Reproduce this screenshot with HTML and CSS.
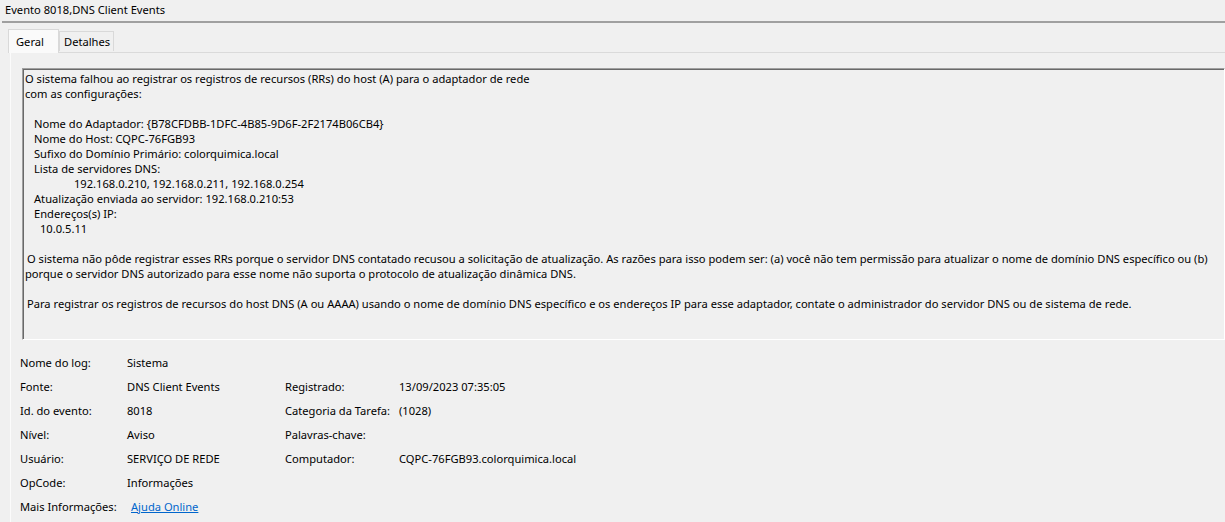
FILE: index.html
```html
<!DOCTYPE html>
<html lang="pt-BR">
<head>
<meta charset="utf-8">
<title>Evento 8018,DNS Client Events</title>
<link rel="stylesheet" href="styles.css">
</head>
<body>
<div class="titlebar">Evento 8018,DNS Client Events</div>
<div class="divider"></div>
<div class="tabs">
  <div class="tab tab-active">Geral</div>
  <div class="tab">Detalhes</div>
</div>
<div class="panel">
  <div class="message">
    <div class="ln">O sistema falhou ao registrar os registros de recursos (RRs) do host (A) para o adaptador de rede</div>
    <div class="ln">com as configurações:</div>
    <div class="ln blank"></div>
    <div class="ln i1">Nome do Adaptador: {B78CFDBB-1DFC-4B85-9D6F-2F2174B06CB4}</div>
    <div class="ln i1">Nome do Host: CQPC-76FGB93</div>
    <div class="ln i1">Sufixo do Domínio Primário: colorquimica.local</div>
    <div class="ln i1">Lista de servidores DNS:</div>
    <div class="ln i3">192.168.0.210, 192.168.0.211, 192.168.0.254</div>
    <div class="ln i1">Atualização enviada ao servidor: 192.168.0.210:53</div>
    <div class="ln i1">Endereços(s) IP:</div>
    <div class="ln i2">10.0.5.11</div>
    <div class="ln blank"></div>
    <div class="ln sp">O sistema não pôde registrar esses RRs porque o servidor DNS contatado recusou a solicitação de atualização. As razões para isso podem ser: (a) você não tem permissão para atualizar o nome de domínio DNS específico ou (b)</div>
    <div class="ln">porque o servidor DNS autorizado para esse nome não suporta o protocolo de atualização dinâmica DNS.</div>
    <div class="ln blank"></div>
    <div class="ln sp">Para registrar os registros de recursos do host DNS (A ou AAAA) usando o nome de domínio DNS específico e os endereços IP para esse adaptador, contate o administrador do servidor DNS ou de sistema de rede.</div>
  </div>
  <div class="info">
    <div>Nome do log:</div><div>Sistema</div><div></div><div></div>
    <div>Fonte:</div><div>DNS Client Events</div><div>Registrado:</div><div>13/09/2023 07:35:05</div>
    <div>Id. do evento:</div><div>8018</div><div>Categoria da Tarefa:</div><div>(1028)</div>
    <div>Nível:</div><div>Aviso</div><div>Palavras-chave:</div><div></div>
    <div>Usuário:</div><div>SERVIÇO DE REDE</div><div>Computador:</div><div>CQPC-76FGB93.colorquimica.local</div>
    <div>OpCode:</div><div>Informações</div><div></div><div></div>
    <div>Mais Informações:</div><div><a class="link" href="#">Ajuda Online</a></div><div></div><div></div>
  </div>
</div>
</body>
</html>
```
FILE: styles.css
```css
html, body {
  margin: 0;
  padding: 0;
  background: #f0f0f0;
  overflow: hidden;
}
body {
  font-family: "Noto Sans", "Liberation Sans", sans-serif;
  font-size: 11.15px;
  color: #000;
  width: 1225px;
  height: 522px;
  display: flex;
  flex-direction: column;
}
.titlebar {
  height: 21px;
  line-height: 20px;
  padding-left: 5px;
  white-space: nowrap;
  flex: none;
}
.divider {
  margin-left: 2px;
  height: 2px;
  background: #a0a0a0;
  flex: none;
}
.tabs {
  display: flex;
  align-items: flex-end;
  padding-left: 8px;
  padding-top: 6px;
  height: 23px;
  flex: none;
}
.tab {
  height: 19px;
  line-height: 19px;
  padding: 0 3px 0 4px;
  border: 1px solid #d9d9d9;
  border-bottom: none;
  background: #f0f0f0;
  margin-bottom: 1px;
}
.tab-active {
  height: 23px;
  line-height: 24px;
  width: 42px;
  padding: 0 0 0 7px;
  background: #fafafa;
  margin-bottom: -1px;
  position: relative;
  z-index: 1;
}
.panel {
  flex: 1;
  min-height: 0;
  margin-left: 10px;
  border-top: 1px solid #dadada;
  border-left: 1px solid #fbfbfb;
  padding: 15px 0 0 11px;
}
.message {
  height: 268px;
  border-top: 1px solid #a0a0a0;
  border-left: 1px solid #a0a0a0;
  border-bottom: 1px solid #ffffff;
  border-right: 1px solid #ffffff;
  box-shadow: inset 1px 1px 0 #696969;
  padding: 2px 0 0 2px;
  box-sizing: content-box;
  line-height: 15px;
  white-space: nowrap;
  overflow: hidden;
}
.ln { height: 15px; }
.i1 { padding-left: 9px; }
.i2 { padding-left: 15px; }
.i3 { padding-left: 49px; }
.sp { padding-left: 2px; }
.info {
  display: grid;
  grid-template-columns: 107px 158px 114px auto;
  grid-auto-rows: 24px;
  line-height: 24px;
  margin-top: 11px;
  margin-left: -2px;
  white-space: nowrap;
}
.link {
  color: #0066cc;
  text-decoration: underline;
  margin-left: 4px;
}
```
